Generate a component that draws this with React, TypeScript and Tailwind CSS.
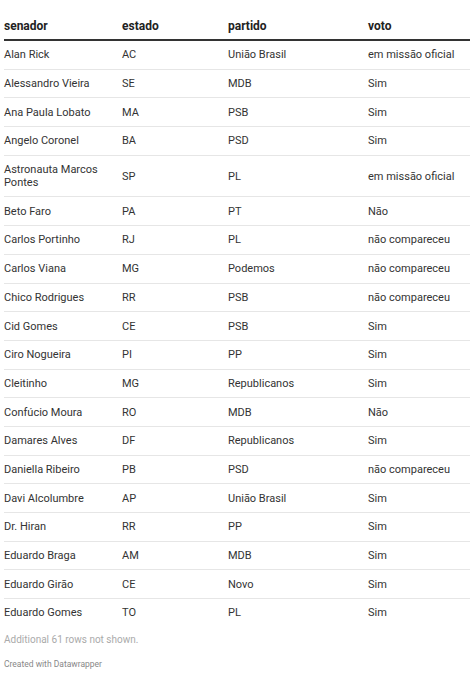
import React from 'react';

const rows: [string, string, string, string][] = [
  ['Alan Rick', 'AC', 'União Brasil', 'em missão oficial'],
  ['Alessandro Vieira', 'SE', 'MDB', 'Sim'],
  ['Ana Paula Lobato', 'MA', 'PSB', 'Sim'],
  ['Angelo Coronel', 'BA', 'PSD', 'Sim'],
  ['Astronauta Marcos Pontes', 'SP', 'PL', 'em missão oficial'],
  ['Beto Faro', 'PA', 'PT', 'Não'],
  ['Carlos Portinho', 'RJ', 'PL', 'não compareceu'],
  ['Carlos Viana', 'MG', 'Podemos', 'não compareceu'],
  ['Chico Rodrigues', 'RR', 'PSB', 'não compareceu'],
  ['Cid Gomes', 'CE', 'PSB', 'Sim'],
  ['Ciro Nogueira', 'PI', 'PP', 'Sim'],
  ['Cleitinho', 'MG', 'Republicanos', 'Sim'],
  ['Confúcio Moura', 'RO', 'MDB', 'Não'],
  ['Damares Alves', 'DF', 'Republicanos', 'Sim'],
  ['Daniella Ribeiro', 'PB', 'PSD', 'não compareceu'],
  ['Davi Alcolumbre', 'AP', 'União Brasil', 'Sim'],
  ['Dr. Hiran', 'RR', 'PP', 'Sim'],
  ['Eduardo Braga', 'AM', 'MDB', 'Sim'],
  ['Eduardo Girão', 'CE', 'Novo', 'Sim'],
  ['Eduardo Gomes', 'TO', 'PL', 'Sim'],
];

const App = () => {
  return (
    <div className="min-h-screen bg-white px-[4px] pt-[19px] font-['Roboto',sans-serif] text-[11px] text-[#333]">
      <div className="w-[466px]">
        {/* header */}
        <div className="grid grid-cols-[118px_106px_140px_1fr] border-b-2 border-[#333] pb-[5px] text-[12px] font-bold text-[#222] leading-[15px]">
          <div>senador</div>
          <div>estado</div>
          <div>partido</div>
          <div>voto</div>
        </div>

        {rows.map((r, i) => (
          <div
            key={i}
            className={`grid grid-cols-[118px_106px_140px_1fr] items-center py-[7.35px] leading-[13px] ${
              i < rows.length - 1 ? 'border-b border-[#e6e6e6]' : ''
            }`}
          >
            <div className="pr-2">{r[0]}</div>
            <div>{r[1]}</div>
            <div>{r[2]}</div>
            <div>{r[3]}</div>
          </div>
        ))}
      </div>

      <p className="mt-[7px] text-[10px] text-[#aaa] leading-[12px]">Additional 61 rows not shown.</p>
      <p className="mt-[13px] text-[8.5px] text-[#888] leading-[10px]">Created with Datawrapper</p>
    </div>
  );
};

export default App;
